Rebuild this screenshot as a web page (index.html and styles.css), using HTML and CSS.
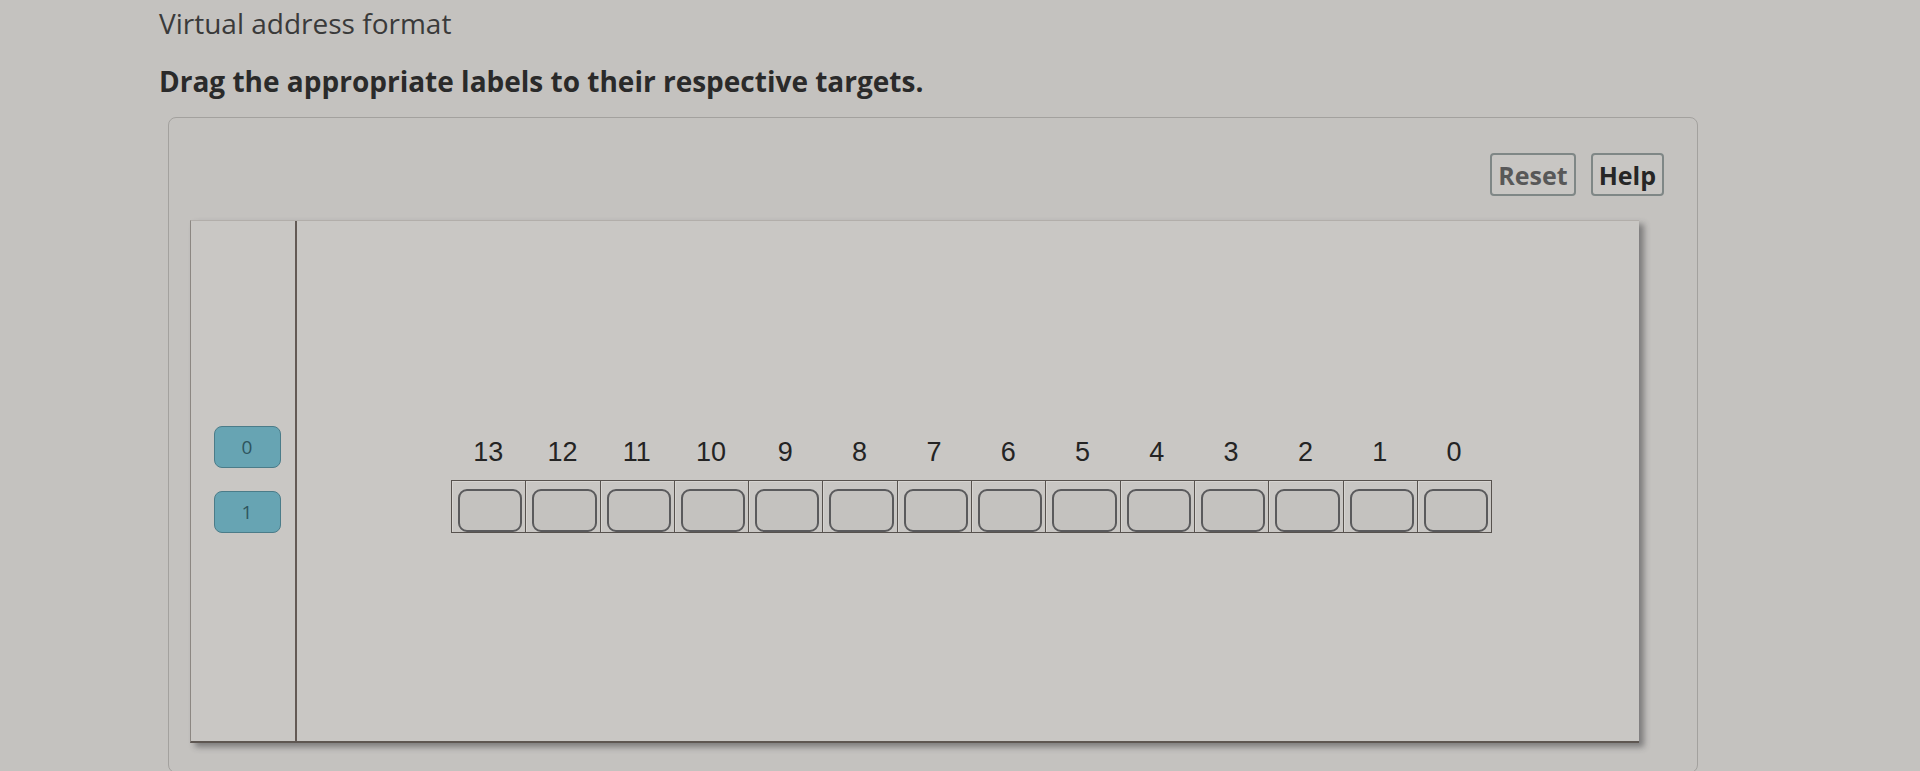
FILE: index.html
```html
<!DOCTYPE html>
<html lang="en">
<head>
    <meta charset="UTF-8">
    <meta name="viewport" content="width=device-width, initial-scale=1.0">
    <title>Virtual address format</title>
    <link rel="stylesheet" href="styles.css">
</head>
<body>
    <div class="page">
        <h1 class="title">Virtual address format</h1>
        <p class="prompt">Drag the appropriate labels to their respective targets.</p>

        <div class="activity">
            <div class="toolbar">
                <button type="button" class="btn btn-reset">Reset</button>
                <button type="button" class="btn">Help</button>
            </div>

            <div class="board">
                <div class="tray">
                    <div class="chip">0</div>
                    <div class="chip">1</div>
                </div>

                <div class="canvas">
                    <div class="bits">
                        <div class="bit-nums">
                            <span>13</span><span>12</span><span>11</span><span>10</span>
                            <span>9</span><span>8</span><span>7</span><span>6</span>
                            <span>5</span><span>4</span><span>3</span><span>2</span>
                            <span>1</span><span>0</span>
                        </div>
                        <div class="bit-cells">
                            <div class="cell"><div class="slot"></div></div>
                            <div class="cell"><div class="slot"></div></div>
                            <div class="cell"><div class="slot"></div></div>
                            <div class="cell"><div class="slot"></div></div>
                            <div class="cell"><div class="slot"></div></div>
                            <div class="cell"><div class="slot"></div></div>
                            <div class="cell"><div class="slot"></div></div>
                            <div class="cell"><div class="slot"></div></div>
                            <div class="cell"><div class="slot"></div></div>
                            <div class="cell"><div class="slot"></div></div>
                            <div class="cell"><div class="slot"></div></div>
                            <div class="cell"><div class="slot"></div></div>
                            <div class="cell"><div class="slot"></div></div>
                            <div class="cell"><div class="slot"></div></div>
                        </div>
                    </div>
                </div>
            </div>
        </div>
    </div>
</body>
</html>
```

FILE: styles.css
```css
body {
    font-family: "Open Sans", "Noto Sans", sans-serif;
    margin: 0;
    padding: 0;
    background-color: #c4c2bf;
    color: #333;
}
.page {
    padding: 6px 0 0 159px;
}
.title {
    margin: 0;
    font-size: 28px;
    line-height: 34px;
    font-weight: normal;
    color: #3a3a3a;
}
.prompt {
    margin: 24px 0 0;
    font-size: 28px;
    line-height: 34px;
    font-weight: bold;
    color: #2a2a2a;
}
.activity {
    margin: 19px 0 0 9px;
    width: 1530px;
    height: 656px;
    border: 1px solid #a3a19e;
    border-radius: 8px;
    padding: 35px 0 0 21px;
    box-sizing: border-box;
}
.toolbar {
    display: flex;
    justify-content: flex-end;
    gap: 15px;
    padding-right: 14px;
    width: 1488px;
    box-sizing: border-box;
}
.btn {
    font-family: "Open Sans", "Noto Sans", sans-serif;
    font-size: 25px;
    font-weight: bold;
    height: 43px;
    padding: 0 6px;
    background-color: #c8c6c3;
    color: #262626;
    border: 2px solid #7f8786;
    border-radius: 4px;
}
.btn-reset {
    color: #585858;
}
.board {
    margin-top: 24px;
    width: 1448px;
    height: 520px;
    display: flex;
    background-color: #c9c7c4;
    border-top: 1px solid #b2aeaa;
    border-left: 1px solid #8c8782;
    border-bottom: 2px solid #5e5752;
    box-shadow: 5px 4px 6px rgba(40, 40, 45, 0.45);
}
.tray {
    width: 106px;
    border-right: 2px solid #635a55;
    display: flex;
    flex-direction: column;
    align-items: center;
    gap: 23px;
    padding: 205px 0 0 8px;
    box-sizing: border-box;
}
.chip {
    width: 67px;
    height: 42px;
    box-sizing: border-box;
    background-color: #67a4b3;
    border: 1px solid #4b7c89;
    border-radius: 8px;
    display: flex;
    align-items: center;
    justify-content: center;
    font-size: 19px;
    color: #2f555e;
}
.canvas {
    flex: 1;
    padding: 216px 0 0 154px;
}
.bits {
    display: inline-block;
}
.bit-nums {
    display: grid;
    grid-template-columns: repeat(14, 74.3px);
    font-family: "Liberation Sans", Arial, sans-serif;
    font-size: 27px;
    line-height: 30px;
    color: #242424;
    text-align: center;
}
.bit-cells {
    display: grid;
    grid-template-columns: repeat(14, 74.3px);
    margin-top: 13px;
    border: 1px solid #57524e;
    border-left: none;
    box-shadow: inset 0 1px 0 #d6d4d1;
}
.cell {
    height: 51px;
    border-left: 1px solid #57524e;
    box-shadow: inset 1px 0 0 #d6d4d1;
    display: flex;
    align-items: flex-end;
}
.slot {
    flex: 1;
    height: 43px;
    margin: 0 3px 0 6px;
    border: 2px solid #5a5a5c;
    border-radius: 9px;
    background-color: #c4c2bf;
    box-sizing: border-box;
}
```
